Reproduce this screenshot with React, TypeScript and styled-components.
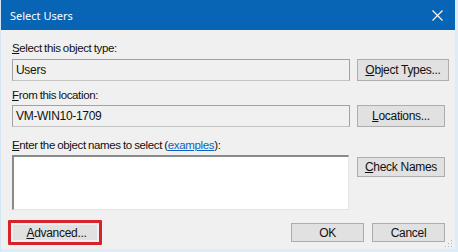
import styled, { createGlobalStyle } from 'styled-components'

const GlobalStyle = createGlobalStyle`
  html, body {
    margin: 0;
    padding: 0;
    background: #f0f0f0;
  }
  * {
    box-sizing: border-box;
  }
`

const Window = styled.div`
  position: relative;
  display: flex;
  flex-direction: column;
  width: 458px;
  height: 252px;
  background: #f0f0f0;
  border-left: 1px solid #d2e6f6;
  border-right: 3px solid #dcecf9;
  border-bottom: 3px solid #dcecf9;
  font-family: 'Liberation Sans', Arial, sans-serif;
  font-size: 12px;
  color: #111;
  overflow: hidden;
`

const TitleBar = styled.div`
  display: flex;
  align-items: center;
  justify-content: space-between;
  height: 30px;
  margin-left: -1px;
  margin-right: -3px;
  padding: 0 10px 0 10px;
  background: #0864b4;
  color: #fff;
  font-family: 'Noto Sans', 'Open Sans', sans-serif;
  font-size: 11px;
`

const CloseButton = styled.div`
  display: flex;
  align-items: center;
  justify-content: center;
  width: 14px;
  height: 14px;
  margin-right: 4px;
`

const Content = styled.div`
  display: flex;
  flex-direction: column;
  padding: 0 0 0 11px;
`

const Label = styled.div<{ $top: number }>`
  height: 14px;
  line-height: 14px;
  margin-top: ${(p) => p.$top}px;
  font-size: 11.5px;
  letter-spacing: -0.35px;
  word-spacing: -0.6px;
  white-space: nowrap;
`

const Row = styled.div<{ $top: number }>`
  display: flex;
  align-items: flex-start;
  gap: 7px;
  margin-top: ${(p) => p.$top}px;
`

const Field = styled.div`
  display: flex;
  align-items: center;
  width: 338px;
  height: 22px;
  padding: 0 3px;
  border: 1px solid #a2a2a2;
  border-bottom-color: #c4c4c4;
  background: #f0f0f0;
  letter-spacing: -0.3px;
`

const NamesBox = styled.div`
  width: 337px;
  height: 55px;
  background: #fff;
  border-top: 2px solid #8a8a8a;
  border-left: 2px solid #8a8a8a;
  border-right: 1px solid #e3e3e3;
  border-bottom: 1px solid #e3e3e3;
`

const Button = styled.div<{ $width: number; $height?: number; $top?: number }>`
  display: flex;
  align-items: center;
  justify-content: center;
  width: ${(p) => p.$width}px;
  height: ${(p) => p.$height ?? 22}px;
  margin-top: ${(p) => p.$top ?? 0}px;
  background: #e1e1e1;
  border: 1px solid #adadad;
  letter-spacing: -0.3px;
  white-space: nowrap;
`

const Footer = styled.div`
  display: flex;
  align-items: center;
  justify-content: space-between;
  margin-top: 10px;
  padding: 0 10px 0 7px;
`

const Highlight = styled.div`
  display: flex;
  width: 94px;
  height: 25px;
  padding: 2px;
  border: 3px solid #d8232c;
  border-radius: 1px;
  background: #f0f0f0;
`

const AdvancedButton = styled.div`
  display: flex;
  align-items: center;
  justify-content: center;
  flex: 1;
  padding-left: 3px;
  background: #e1e1e1;
  letter-spacing: -0.3px;
`

const FooterButtons = styled.div`
  display: flex;
  gap: 8px;
`

const Link = styled.span`
  color: #0b62c4;
  text-decoration: underline;
`

const Grip = styled.svg`
  position: absolute;
  right: 2px;
  bottom: 1px;
`

export default function App() {
  return (
    <>
      <GlobalStyle />
      <Window>
        <TitleBar>
          <span>Select Users</span>
          <CloseButton>
            <svg width="11" height="11" viewBox="0 0 11 11">
              <path d="M0.5 0.5 L10.5 10.5 M10.5 0.5 L0.5 10.5" stroke="#fff" strokeWidth="1.1" />
            </svg>
          </CloseButton>
        </TitleBar>
        <Content>
          <Label $top={11}>
            <u>S</u>elect this object type:
          </Label>
          <Row $top={4}>
            <Field>Users</Field>
            <Button $width={92}>
              <u>O</u>bject Types...
            </Button>
          </Row>
          <Label $top={7}>
            <u>F</u>rom this location:
          </Label>
          <Row $top={3}>
            <Field>VM-WIN10-1709</Field>
            <Button $width={88}>
              <u>L</u>ocations...
            </Button>
          </Row>
          <Label $top={11}>
            <u>E</u>nter the object names to select (<Link>examples</Link>):
          </Label>
          <Row $top={3}>
            <NamesBox />
            <Button $width={88} $height={20} $top={2} style={{ marginLeft: 1 }}>
              <u>C</u>heck Names
            </Button>
          </Row>
        </Content>
        <Footer>
          <Highlight>
            <AdvancedButton>
              <u>A</u>dvanced...
            </AdvancedButton>
          </Highlight>
          <FooterButtons>
            <Button $width={73} $height={19}>
              OK
            </Button>
            <Button $width={73} $height={19}>
              Cancel
            </Button>
          </FooterButtons>
        </Footer>
        <Grip width="8" height="8" viewBox="0 0 8 8">
          <rect x="6" y="0" width="1" height="1" fill="#b8b8b8" />
          <rect x="3" y="3" width="1" height="1" fill="#b8b8b8" />
          <rect x="6" y="3" width="1" height="1" fill="#b8b8b8" />
          <rect x="0" y="6" width="1" height="1" fill="#b8b8b8" />
          <rect x="3" y="6" width="1" height="1" fill="#b8b8b8" />
          <rect x="6" y="6" width="1" height="1" fill="#b8b8b8" />
        </Grip>
      </Window>
    </>
  )
}
